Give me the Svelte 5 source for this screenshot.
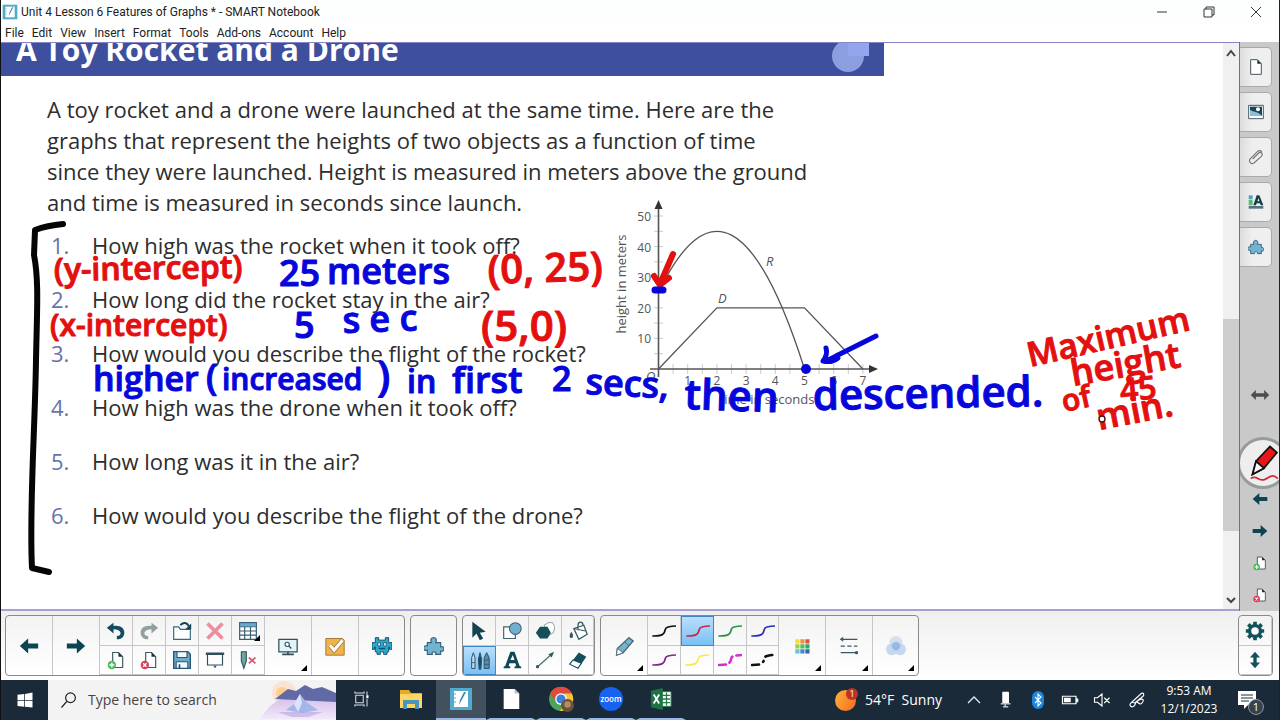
<script>
  const menus = ['File', 'Edit', 'View', 'Insert', 'Format', 'Tools', 'Add-ons', 'Account', 'Help'];

  const questions = [
    'How high was the rocket when it took off?',
    'How long did the rocket stay in the air?',
    'How would you describe the flight of the rocket?',
    'How high was the drone when it took off?',
    'How long was it in the air?',
    'How would you describe the flight of the drone?'
  ];

  const RED = '#e3100f';
  const BLUE = '#0606dc';

  // Ink notes on the free canvas: text, x, baseline, size, colour, slant in degrees
  const notes = [
    ['(y-intercept)', 54, 281, 32, RED, -1],
    ['25', 279, 286, 36, BLUE, 0],
    ['meters', 327, 284, 36, BLUE, 0],
    ['(0, 25)', 488, 284, 40, RED, -2],
    ['(x-intercept)', 50, 336, 30, RED, 0],
    ['5', 294, 338, 36, BLUE, 0],
    ['s e c', 343, 333, 36, BLUE, -2],
    ['(5,0)', 481, 341, 42, RED, 0],
    ['higher', 93, 391, 34, BLUE, 0],
    ['(', 206, 390, 36, BLUE, 0],
    ['increased', 222, 390, 30, BLUE, 0],
    [')', 377, 391, 42, BLUE, 0],
    ['in', 407, 393, 32, BLUE, 0],
    ['first', 452, 393, 36, BLUE, 0],
    ['2', 552, 391, 34, BLUE, 0],
    ['secs,', 585, 394, 36, BLUE, 3],
    ['then', 684, 409, 42, BLUE, 2],
    ['descended.', 813, 410, 42, BLUE, -1],
    ['Maximum', 1030, 367, 34, RED, -13],
    ['height', 1073, 386, 36, RED, -10],
    ['of', 1064, 412, 30, RED, -12],
    ['45', 1121, 402, 32, RED, -6],
    ['min.', 1099, 430, 36, RED, -11]
  ];

  const xTicks = [1, 2, 3, 4, 5, 6, 7];
  const yTicks = [10, 20, 30, 40, 50];
  const halves = Array.from({ length: 14 }, (_, i) => (i + 1) / 2);
  const fives = Array.from({ length: 10 }, (_, i) => (i + 1) * 5);
  const gx = (t) => 658.5 + t * 29.2;
  const gy = (h) => 369 - h * 3.06;

  const page = '<path d="M8 3h7l5 5v13H8z" fill="#fff" stroke="#3f5960" stroke-width="1.4"/><path d="M15 3v5h5z" fill="#12343b"/>';
  const stroke = (c, d = '') =>
    `<path d="M1 17c5 0 9 0 11-3s0-5 4-6 5-1 8-1" fill="none" stroke="${c}" stroke-width="${d ? 2.6 : 1.7}" stroke-linecap="round" stroke-dasharray="${d}"/>`;
  const puzzle = '<path d="M4 8h5c-4-8 9-8 5 0h6v5c5-2 5 7 0 5v4h-6c2-4-6-4-4 0H4v-5c-6 2-6-7 0-5z" fill="#73b3d2" stroke="#3b6276" stroke-width="1.4"/>';

  const icons = {
    left: '<path d="M1 12l10-9v6h12v6H11v6z" fill="#0b4650"/>',
    right: '<path d="M23 12L13 3v6H1v6h12v6z" fill="#0b4650"/>',
    undo: '<path d="M1 8l8-6v4c9-1 13 3 13 8s-4 8-9 8v-4c7 0 6-8-4-8v5z" fill="#144b5e"/>',
    redo: '<path d="M23 8l-8-6v4C6 5 2 9 2 14s4 8 9 8v-4c-7 0-6-8 4-8v5z" fill="#929ea2"/>',
    open: '<path d="M2 22V7h6l2 3h12v12z" fill="#fff" stroke="#386879" stroke-width="1.4"/><path d="M10 5c4-4 8-3 10 1" fill="none" stroke="#124451" stroke-width="2.4"/><path d="M23 3v7h-7z" fill="#124451"/>',
    cross: '<path d="M3 3l18 18M21 3L3 21" stroke="#ed8ea0" stroke-width="4.5"/>',
    table: '<path d="M2 2h20v20H2z" fill="#fff" stroke="#355e72" stroke-width="1.4"/><path d="M2 2h20v5H2z" fill="#69a9cc" stroke="#355e72"/><path d="M2 12h20M2 17h20M8 7v15M15 7v15" stroke="#355e72" stroke-width="1.4"/>',
    addpage: page + '<circle cx="7" cy="18" r="5" fill="#4bbb5a"/><path d="M7 15v6M4 18h6" stroke="#fff" stroke-width="1.6"/>',
    delpage: page + '<circle cx="7" cy="18" r="5" fill="#d8405a"/><path d="M5 16l4 4M9 16l-4 4" stroke="#fff" stroke-width="1.6"/>',
    save: '<path d="M2 2h17l3 3v17H2z" fill="#6aaccd" stroke="#285570" stroke-width="1.6"/><path d="M6 2h12v7H6zM5 14h14v8H5z" fill="#f5f8fa" stroke="#285570" stroke-width="1.3"/><path d="M9 17v5" stroke="#285570" stroke-width="2"/>',
    screen: '<path d="M3 5h18v13H3z" fill="#fff" stroke="#31505c" stroke-width="1.4"/><path d="M1 3h22v3H1z" fill="#31505c"/><path d="M10 19h4l-2 3z" fill="#31505c"/>',
    penx: '<path d="M4 2h6v11l-3 9-3-9z" fill="#6fa39c" stroke="#28565e" stroke-width="1.3"/><path d="M13 9l8 7M21 9l-8 7" stroke="#de5874" stroke-width="2"/>',
    monitor: '<path d="M1 4h22v15H1z" fill="#e3f3f8" stroke="#31505c" stroke-width="1.5"/><path d="M12 19v3M5 22h14" stroke="#31505c" stroke-width="2"/><circle cx="11" cy="10" r="2.6" fill="#fff" stroke="#31505c" stroke-width="1.3"/><path d="M13 12l3 3" stroke="#31505c" stroke-width="1.6"/>',
    check: '<path d="M1 3h20l2 2v18H1z" fill="#efb349" stroke="#a67c3d" stroke-width="1.2"/><path d="M6 11l5 6L21 5" fill="none" stroke="#a67c3d" stroke-width="5.5"/><path d="M6 11l5 6L21 5" fill="none" stroke="#fff" stroke-width="3.6"/>',
    alien: '<path d="M4 2h4v3h8V2h4v6h4v8h-3v-3h-1v6h-2v3h-4v-3h-4v3H6v-3H4v-6H3v3H0V8h4z" fill="#2ba9cd" stroke="#17526c" stroke-width="1.2"/><path d="M7 8h3v4H7zM14 8h3v4h-3z" fill="#fff" stroke="#17526c"/><path d="M8 15h8" stroke="#17526c" stroke-width="2"/>',
    puzzle,
    cursor: '<path d="M4 1l16 12-7 1 4 7-4 2-4-8-5 5z" fill="#12434f"/>',
    shapes: '<path d="M2 7h14v14H2z" fill="#fff" stroke="#42616d" stroke-width="1.4"/><circle cx="16" cy="9" r="7" fill="#73afd0" stroke="#42616d" stroke-width="1.3"/>',
    polygon: '<path d="M11 5l5-3h5l3 5-2 7-5 3z" fill="#fff" stroke="#7b898d"/><path d="M6 7h9l4 7-4 7H6l-5-7z" fill="#14505b"/>',
    bucket: '<path d="M7 9l12-4 4 11-10 6z" fill="#fff" stroke="#355a63" stroke-width="1.5"/><path d="M7 9l14 3M12 11V5c0-5 6-5 6 0" fill="none" stroke="#355a63" stroke-width="1.5"/><path d="M4 13c7 10-7 10 0 0z" fill="#355a63"/>',
    pens: '<g fill="#bcdcf0" stroke="#2c566a" stroke-width="1.2"><path d="M2 8l2-6 2 6v13H2z"/><path d="M10 10l2-8 2 8-1 12h-2z" fill="#1d4e60"/><path d="M17 8l3-6 3 6v13h-6z" fill="#5e8ba2"/></g><path d="M2 14h4M17 11h6M17 16h6" stroke="#2c566a"/>',
    letter: '<path d="M2 22v-2l2-1 6-17h5l6 17 2 1v2h-8v-2l2-1-1-3H9l-1 3 2 1v2zM10 12h5l-2-6z" fill="#124853"/>',
    line: '<path d="M3 20L20 5" stroke="#516b73" stroke-width="1.5"/><circle cx="3" cy="20" r="2" fill="#355a63"/><path d="M23 2l-3 7-4-4z" fill="#355a63"/>',
    eraser: '<path d="M13 3l9 5-9 13-10-5z" fill="#14505b"/><path d="M6 12l-4 5 10 5 4-6z" fill="#fff" stroke="#14505b" stroke-width="1.4"/>',
    pen: '<path d="M18 2l5 4-12 14-8 3 1-8z" fill="#76b4cb" stroke="#446673" stroke-width="1.5"/><path d="M4 15l7 5-8 3z" fill="#fff" stroke="#446673"/><path d="M13 7l5 5" stroke="#446673"/>',
    s1: stroke('#111'), s2: stroke('#cf2540'), s3: stroke('#2c9240'), s4: stroke('#2a2fb4'),
    s5: stroke('#7c2889'), s6: stroke('#f3ea4a'), s7: stroke('#d62fd0', '7 4'), s8: stroke('#111', '7 5 1 5'),
    grid: ['#f4dc36', '#ee9338', '#e44f4b', '#a2cf49', '#58bb55', '#2fa865', '#65c1dc', '#3d8cc9', '#3a62ae']
      .map((c, i) => `<path d="M${4 + (i % 3) * 6} ${4 + Math.floor(i / 3) * 6}h5v5h-5z" fill="${c}"/>`).join(''),
    lines: '<path d="M2 4h20M2 20h18" stroke="#355a63" stroke-width="1.5"/><path d="M2 12h20" stroke="#355a63" stroke-width="1.5" stroke-dasharray="5 3"/><path d="M5 1v6L1 4z" fill="#355a63"/><circle cx="21" cy="20" r="2" fill="#355a63"/>',
    blobs: '<circle cx="12" cy="8" r="8" fill="#d6e0ec"/><circle cx="7" cy="16" r="7" fill="#b8d0ec" opacity=".8"/><circle cx="17" cy="16" r="7" fill="#b8d0ec" opacity=".8"/><circle cx="12" cy="12" r="5" fill="#8bb2e3" opacity=".8"/>',
    gear: '<path d="M12 1v22M1 12h22M4 4l16 16M20 4L4 20" stroke="#12525c" stroke-width="4.4"/><circle cx="12" cy="12" r="6.5" fill="#fff" stroke="#12525c" stroke-width="4"/>',
    updown: '<path d="M12 2l6 7h-4v6h4l-6 7-6-7h4V9H6z" fill="#12525c"/>',
    leftright: '<path d="M1 12l6-6v4h10V6l6 6-6 6v-4H7v4z" fill="#4d4d4d"/>',
    page: '<path d="M4 1h10l6 6v16H4z" fill="#fff" stroke="#4a555a" stroke-width="1.5"/><path d="M14 1v6h6z" fill="#12343b"/>',
    picture: '<path d="M1 2h22v20H1z" fill="#fff" stroke="#34515e" stroke-width="1.4"/><path d="M3 4h18v14H3z" fill="#17455a"/><path d="M3 18V9c8 4 12 2 18 9z" fill="#8fbdd6"/><circle cx="15" cy="8" r="3" fill="#fff"/>',
    clip: '<path d="M7 15L16 6c4-3 7 2 4 5L9 21c-5 3-9-3-5-7L14 4c2-2 5-2 7 0" fill="none" stroke="#747474" stroke-width="1.7"/>',
    themes: '<path d="M1 2h6v6H1z" fill="#55a2c0"/><path d="M1 9h6v8H1z" fill="#55be74"/><path d="M8 17l5-15h4l6 15h-4l-1-3h-5l-1 3zM14 11h3l-1-5z" fill="#123f4a"/><path d="M1 18h22v4H1z" fill="#58717c"/>',
    app: '<path d="M1 1h22v22H1z" fill="#54aacd"/><path d="M5 4h14v16H5z" fill="#fff"/><path d="M17 5l-7 13 1-5 4-8z" fill="#3486ae"/><path d="M5 7h2M5 11h2M5 15h2" stroke="#54aacd"/>',
    win: '<path d="M2 5l9-1v8H2zM12 4l10-2v10H12zM2 13h9v8l-9-1zM12 13h10v9l-10-1z" fill="#fff"/>',
    search: '<circle cx="14" cy="9" r="6.5" fill="none" stroke="#222" stroke-width="1.6"/><path d="M9 14l-7 8" stroke="#222" stroke-width="1.6"/>',
    taskview: '<path d="M5 7h10v10H5zM4 4V2M16 4V2M4 20v2M16 20v2M3 4h14M3 20h14M20 2v5M20 12v10" fill="none" stroke="#d7dce0" stroke-width="1.4"/><path d="M19 7h3v4h-3z" fill="#fff"/>',
    folder: '<path d="M1 3h9l2 3h11v15H1z" fill="#e4a92e"/><path d="M1 7h22v14H1z" fill="#ffd662"/><path d="M4 13h16v9h-4v-5H8v5H4z" fill="#4a95bd"/>',
    doc: '<path d="M4 1h12l5 5v17H4z" fill="#fff"/><path d="M16 1v5h5z" fill="#bbb"/>',
    chrome: '<circle cx="12" cy="12" r="11" fill="#4aa657"/><path d="M2 7a11 11 0 0 1 20 0H12l-5 7z" fill="#df4a3d"/><path d="M22 7a11 11 0 0 1-11 16l5-9-1-7z" fill="#f5c631"/><circle cx="12" cy="12" r="5.4" fill="#fff"/><circle cx="12" cy="12" r="4.2" fill="#3c7fe0"/><circle cx="18" cy="18" r="6" fill="#6e5035"/><circle cx="18" cy="17" r="3" fill="#b28c65"/>',
    bluetooth: '<rect x="4" y="0" width="16" height="24" rx="8" fill="#1c86df"/><path d="M8 8l8 8-4 4V4l4 4-8 8" fill="none" stroke="#fff" stroke-width="1.5"/>',
    up: '<path d="M4 16l8-8 8 8" fill="none" stroke="#e8edf0" stroke-width="1.7"/>',
    mic: '<rect x="7" y="1" width="9" height="16" rx="1" fill="#fff"/><path d="M5 17h13M8 21h7M11 17v4" stroke="#bac4cb" stroke-width="2"/>',
    battery: '<path d="M2 7h18v10H2z" fill="none" stroke="#fff" stroke-width="1.6"/><path d="M4 9h9v6H4zM20 10h3v5h-3z" fill="#fff"/>',
    mute: '<path d="M2 9h4l6-5v16l-6-5H2zM15 9l7 7M22 9l-7 7" fill="none" stroke="#fff" stroke-width="1.5"/>',
    inkpen: '<path d="M5 15L18 3c3-1 4 2 2 4L9 16zM5 15c-6 4 1 9 4 4 2-6 3-5 5-3s4 2 6-2c2-5-6-4-10 2" fill="none" stroke="#fff" stroke-width="1.5"/>',
    excel: '<path d="M12 4h11v16H12z" fill="#fff" stroke="#237b4b"/><path d="M13 8h9M13 12h9M13 16h9M18 5v14" stroke="#237b4b" stroke-width="1.4"/><path d="M1 3l13-3v24L1 21z" fill="#1c7444"/><path d="M4 7l6 10M10 7L4 17" stroke="#fff" stroke-width="2"/>'
  };

  const files = [
    ['undo', 'Undo'], ['redo', 'Redo'], ['open', 'Open file'], ['cross', 'Delete'], ['table', 'Table', true],
    ['addpage', 'Add page'], ['delpage', 'Delete page'], ['save', 'Save'], ['screen', 'Screen shade'], ['penx', 'Clear ink']
  ];
  const tools = [
    ['cursor', 'Select'], ['shapes', 'Shapes'], ['polygon', 'Regular polygons'], ['bucket', 'Fill'],
    ['pens', 'Pens', false, true], ['letter', 'Text'], ['line', 'Lines'], ['eraser', 'Eraser']
  ];
  const inks = [
    ['s1', 'Black ink'], ['s2', 'Red ink', false, true], ['s3', 'Green ink'], ['s4', 'Blue ink'],
    ['s5', 'Purple ink'], ['s6', 'Yellow ink'], ['s7', 'Magenta dashes'], ['s8', 'Black dashes']
  ];
  const tabs = [
    ['page', 'Page sorter'], ['picture', 'Gallery'], ['clip', 'Attachments'], ['themes', 'Properties'], ['puzzle', 'Add-ons']
  ];
  const pageTools = [['left', 'Previous page'], ['right', 'Next page'], ['addpage', 'Add page'], ['delpage', 'Delete page']];
  const tray = [['up', 'Show hidden icons'], ['mic', 'Microphone'], ['bluetooth', 'Bluetooth'], ['battery', 'Battery'], ['mute', 'Volume muted'], ['inkpen', 'Pen menu']];
</script>

{#snippet icon(name, size = 20)}
  <svg width={size} height={size} viewBox="0 0 24 24" aria-hidden="true">{@html icons[name]}</svg>
{/snippet}

{#snippet tool([name, label, more, active], big)}
  <button class="tool" class:big class:active aria-label={label}>
    {@render icon(name, name[0] === 's' && name.length === 2 ? 24 : 20)}
    {#if more}<span class="more"></span>{/if}
  </button>
{/snippet}

<div class="window">
  <header class="titlebar">
    {@render icon('app', 16)}
    <span class="title">Unit 4 Lesson 6 Features of Graphs * - SMART Notebook</span>
    <button aria-label="Minimize"><svg width="12" height="12"><path d="M1 6h10" stroke="#333" /></svg></button>
    <button aria-label="Restore"><svg width="12" height="12"><path d="M1 3h8v8H1zM3 3V1h8v8H9" fill="none" stroke="#333" /></svg></button>
    <button aria-label="Close"><svg width="12" height="12"><path d="M1 1l10 10M11 1L1 11" stroke="#333" /></svg></button>
  </header>

  <nav class="menubar">
    {#each menus as m}<button>{m}</button>{/each}
  </nav>

  <main class="work">
    <section class="canvas">
      <div class="banner">
        <h1>A Toy Rocket and a Drone</h1>
        <svg class="mark" width="38" height="33" aria-hidden="true">
          <circle cx="17" cy="13" r="16" fill="#8b9ee0" />
          <path d="M17 0h27v13H17z" fill="#91a6ec" />
        </svg>
      </div>
      <p class="intro">
        A toy rocket and a drone were launched at the same time. Here are the<br />
        graphs that represent the heights of two objects as a function of time<br />
        since they were launched. Height is measured in meters above the ground<br />
        and time is measured in seconds since launch.
      </p>
      <ol class="questions">
        {#each questions as q, i}
          <li><span class="num">{i + 1}.</span><span>{q}</span></li>
        {/each}
      </ol>

      <svg class="layer">
        <g transform="translate(-1 -43)">
          <g class="graph">
            {#each halves as t}<path d="M{gx(t)} 364v10" class="tick" />{/each}
            {#each fives as h}<path d="M654 {gy(h)}h9" class="tick" />{/each}
            <path d="M658.5 377V209M650 369h219" stroke-width="1.6" />
            <path d="M658.5 200l-4 9h8zM878 369l-9-4v8z" fill="#333" stroke="none" />
            <path d="M{gx(0)} {gy(25)}Q{gx(2.5)} {gy(75)} {gx(5)} {gy(0)}" />
            <path d="M{gx(0)} {gy(0)}L{gx(2)} {gy(20)}H{gx(5)}L{gx(7)} {gy(0)}" />
            {#each xTicks as t}<text x={gx(t)} y="385" text-anchor="middle">{t}</text>{/each}
            {#each yTicks as h}<text x="651" y={gy(h) + 5} text-anchor="end">{h}</text>{/each}
            <text x="646" y="381" class="it">O</text>
            <text x="766" y="266" class="it">R</text>
            <text x="718" y="303" class="it">D</text>
            <text x="767" y="404" text-anchor="middle" class="axis">time in seconds</text>
            <text transform="translate(626 284) rotate(-90)" text-anchor="middle" class="axis">height in meters</text>
          </g>

          <g fill="none" stroke-linecap="round" stroke-linejoin="round">
            <path d="M63 224C52 225 43 227 35 230L34 255C39 280 37 310 36 360C35 430 29 510 32 568L49 572" stroke="#050505" stroke-width="6" />
            <path d="M673 254l-13 30M654 276l6 9 9-7" stroke={RED} stroke-width="6" />
            <path d="M655 290h8" stroke={BLUE} stroke-width="7" />
            <path d="M876 336L838 355Q828 361 823 361Q828 355 826 348M823 361Q832 363 838 358" stroke={BLUE} stroke-width="5" />
            <circle cx="806" cy="369" r="5" fill={BLUE} stroke="none" />
          </g>

          {#each notes as [t, x, y, size, color, turn]}
            <text class="note" transform="translate({x} {y}) rotate({turn})" font-size={size} fill={color} stroke={color}>{t}</text>
          {/each}
          <circle cx="1102" cy="419" r="3" fill="#fff" stroke="#4a1010" stroke-width="1.4" />
        </g>
      </svg>
    </section>

    <div class="scroll" aria-hidden="true">
      <svg width="16" height="20"><path d="M4 13l4-5 4 5" fill="none" stroke="#444" stroke-width="2" /></svg>
      <div class="gap above"></div>
      <div class="thumb"></div>
      <div class="gap below"></div>
      <svg width="16" height="20"><path d="M4 9l4 4 4-4" fill="none" stroke="#444" stroke-width="2" /></svg>
    </div>

    <aside class="side">
      {#each tabs as [name, label]}
        <button class="tab" aria-label={label}>{@render icon(name, 16)}</button>
      {/each}
      <button class="resize" aria-label="Move sidebar">{@render icon('leftright', 20)}</button>
      <div class="pages">
        <button class="pen" aria-label="Red pen">
          <svg width="40" height="40" viewBox="0 0 46 46">
            <path d="M31 4l8 7-15 18-13 7 4-15z" fill="#e81616" stroke="#111" stroke-width="2" />
            <path d="M15 21l9 8-13 7z" fill="#fff" stroke="#111" stroke-width="2" />
            <path d="M9 41c6-5 10 4 16 1s9-7 15-1" fill="none" stroke="#d72633" stroke-width="2" />
          </svg>
        </button>
        {#each pageTools as [name, label]}
          <button aria-label={label}>{@render icon(name, 16)}</button>
        {/each}
      </div>
    </aside>
  </main>

  <section class="toolbar" aria-label="Toolbar">
    <div class="group">
      {@render tool(['left', 'Previous page'], true)}
      {@render tool(['right', 'Next page'], true)}
      <div class="pairs five">{#each files as f}{@render tool(f)}{/each}</div>
      {@render tool(['monitor', 'View screens', true], true)}
      {@render tool(['check', 'Assessment'], true)}
      {@render tool(['alien', 'Activity builder'], true)}
    </div>
    <div class="group">{@render tool(['puzzle', 'Add-ons'], true)}</div>
    <div class="group">
      <div class="pairs">{#each tools as f}{@render tool(f)}{/each}</div>
    </div>
    <div class="group">
      {@render tool(['pen', 'Pen type', true], true)}
      <div class="pairs">{#each inks as f}{@render tool(f)}{/each}</div>
      {@render tool(['grid', 'Colour', true], true)}
      {@render tool(['lines', 'Line style', true], true)}
      {@render tool(['blobs', 'Transparency', true], true)}
    </div>
    <div class="group end">
      <div class="pairs one">
        {@render tool(['gear', 'Customize toolbar'])}
        {@render tool(['updown', 'Move toolbar'])}
      </div>
    </div>
  </section>

  <footer class="taskbar">
    <button class="start" aria-label="Start">{@render icon('win', 18)}</button>
    <label class="search">
      {@render icon('search', 18)}
      <input type="text" placeholder="Type here to search" aria-label="Type here to search" />
      <svg class="scene" width="76" height="38" viewBox="0 0 76 38" aria-hidden="true">
        <defs>
          <linearGradient id="water" x2="0" y2="1"><stop stop-color="#d6c0eb" /><stop offset="1" stop-color="#f1e9fa" /></linearGradient>
        </defs>
        <circle cx="24" cy="12" r="12" fill="#fbe3d4" /><circle cx="22" cy="12" r="6" fill="#fbd08a" />
        <path d="M0 38C8 26 16 18 26 17h50v21z" fill="url(#water)" />
        <path d="M15 18l13-10 8 2 9-6 8 4 9-2 14 6v9z" fill="#626aa6" />
        <path d="M26 29l8-6 6-10 6 8 12 8-16 3z" fill="#a4b6e8" /><path d="M34 23l6-10 2 9-4 9z" fill="#d9e4fb" />
        <path d="M18 31h45l-15 5H32z" fill="#a99ad9" opacity=".5" />
      </svg>
    </label>
    <button class="app plain" aria-label="Task view">{@render icon('taskview', 18)}</button>
    <button class="app plain" aria-label="File Explorer">{@render icon('folder', 24)}</button>
    <button class="app current" aria-label="SMART Notebook">{@render icon('app', 24)}</button>
    <button class="app" aria-label="Document">{@render icon('doc', 22)}</button>
    <button class="app" aria-label="Chrome">{@render icon('chrome', 26)}</button>
    <button class="app"><span class="zoom">zoom</span></button>
    <button class="app" aria-label="Excel">{@render icon('excel', 22)}</button>

    <button class="weather"><span class="sun"><span class="count">1</span></span>54°F&nbsp; Sunny</button>
    <div class="tray">
      {#each tray as [name, label]}<button aria-label={label}>{@render icon(name, 18)}</button>{/each}
    </div>
    <button class="clock"><span>9:53 AM</span><span>12/1/2023</span></button>
    <button class="notice" aria-label="1 notification">
      <svg width="20" height="20" viewBox="0 0 20 20"><path d="M1 1h18v14h-8l-4 4v-4H1z" fill="#fff" /><path d="M4 5h12M4 8h12M4 11h8" stroke="#1b2a3a" /></svg>
      <span class="one-badge">1</span>
    </button>
  </footer>
</div>

<style>
  :global(body) { margin: 0; background: #000; }
  * { box-sizing: border-box; }
  button {
    margin: 0; padding: 0; border: 0; background: none; color: inherit; font: inherit;
    display: flex; align-items: center; justify-content: center;
  }
  svg { display: block; flex: none; }

  .window {
    height: 100vh; display: flex; flex-direction: column; overflow: hidden;
    border-left: 1px solid #111; border-right: 1px solid #222;
    background: #fff; color: #222; font: 12px/16px "Open Sans", "Noto Sans", sans-serif;
  }
  .titlebar, .menubar { font-family: Roboto, "Open Sans", sans-serif; }
  .titlebar { display: flex; align-items: center; height: 24px; padding-left: 1px; background: #fdffff; }
  .title { flex: 1; padding-left: 3px; }
  .titlebar button { width: 47px; height: 24px; }
  .menubar { display: flex; gap: 8px; height: 18px; padding-left: 4px; background: #fff; }

  .work { flex: 1; min-height: 0; display: flex; }
  .canvas {
    position: relative; flex: 1; min-width: 0; overflow: hidden; background: #fff;
    border-top: 1px solid #8a84c4; border-bottom: 2px solid #a79fd2;
  }
  .banner {
    display: flex; justify-content: space-between; align-items: flex-end;
    height: 33px; width: 883px; max-width: 100%; padding: 0 15px 0 15px;
    background: #3e4f9d; color: #fff; overflow: hidden;
  }
  h1 { margin: 0 0 6px; font-size: 30px; line-height: 40px; font-weight: 700; white-space: nowrap; }
  .intro {
    margin: 18px 0 0 46px; font-size: 22px; line-height: 31px; color: #2d2d2d; white-space: nowrap;
  }
  .questions { margin: 0; padding: 0 0 0 50px; list-style: none; font-size: 22px; line-height: 54px; color: #2d2d2d; }
  .questions li { display: flex; height: 54px; white-space: nowrap; }
  .num { width: 41px; color: #6673ab; }

  .layer { position: absolute; inset: 0; width: 100%; height: 100%; }
  .graph { fill: none; stroke: #555; stroke-width: 1.3; }
  .graph .tick { stroke: #ccc; stroke-width: 1; }
  .graph text { fill: #555; stroke: none; font-size: 12px; }
  .graph .it { font-style: italic; font-size: 13px; }
  .graph .axis { font-size: 13px; }
  .note { font-family: "Open Sans", "Noto Sans", sans-serif; font-weight: 600; stroke-width: 1; stroke-linejoin: round; }

  .scroll {
    width: 16px; display: flex; flex-direction: column; background: #f0f0f0;
    border-top: 1px solid #8a84c4; border-bottom: 2px solid #a79fd2;
  }
  .gap.above { flex: 256; }
  .thumb { flex: 213; background: #cdcdcd; }
  .gap.below { flex: 58; }

  .side {
    width: 40px; display: flex; flex-direction: column; gap: 5px; padding-top: 5px;
    border-left: 1px solid #7167b8; background: #c9c9c9; overflow: hidden;
  }
  .tab {
    width: 32px; height: 40px; border: 1px solid #aaa; border-left: 0; border-radius: 0 5px 5px 0;
    background: linear-gradient(90deg, #dcdcdc, #efefef 40%);
  }
  .resize { margin-top: 108px; height: 30px; }
  .pages { position: relative; margin-top: auto; display: flex; flex-direction: column; }
  .pages > button { height: 32px; }
  .pages > .pen {
    position: absolute; left: -3px; top: -46px; width: 52px; height: 52px; z-index: 1;
    border: 3px solid #969c9c; border-radius: 50%; background: #eee;
  }

  .toolbar {
    display: flex; gap: 5px; padding: 4px 6px 4px 4px; height: 69px;
    background: linear-gradient(#efefef, #fff);
  }
  .group {
    display: flex; height: 61px; border: 1px solid #8b8989; border-radius: 4px; overflow: hidden;
    background: linear-gradient(#f3f3f3, #fff);
  }
  .group.end { margin-left: auto; }
  .pairs { display: grid; grid-template-columns: repeat(3, 33px) 32px; grid-template-rows: 30px 29px; }
  .pairs.five { grid-template-columns: repeat(5, 33px); }
  .pairs.one { grid-template-columns: 33px; }
  .tool { position: relative; border-right: 1px solid #c6c6c6; border-bottom: 1px solid #c6c6c6; }
  .tool.big { width: 47px; border-bottom: 0; }
  .group > .tool:last-child { border-right: 0; width: 45px; }
  .tool.active { background: linear-gradient(#b9defb, #79c1f5); border: 1px solid #3f86c4; }
  .more { position: absolute; right: 4px; bottom: 4px; border: 3px solid #000; border-top-color: transparent; border-left-color: transparent; }

  .taskbar { display: flex; height: 40px; background: #1b2a39; color: #fff; font-size: 14px; }
  .start { width: 47px; }
  .search { display: flex; align-items: center; width: 288px; background: #f3f3f3; padding-left: 12px; overflow: hidden; }
  .search input {
    flex: 1; min-width: 0; padding: 0 0 0 10px; border: 0; outline: 0; background: none;
    font: 14px/20px "Open Sans", "Noto Sans", sans-serif; color: #333;
  }
  .search input::placeholder { color: #444; opacity: 1; }
  .app { width: 50px; border-bottom: 2px solid #9ab8e6; background-clip: padding-box; border-left: 4px solid transparent; border-right: 4px solid transparent; }
  .app.plain { border-color: transparent; }
  .app.current { border-left: 0; border-right: 0; background: #43515f; }
  .zoom {
    width: 24px; height: 24px; border-radius: 50%; background: #1763f0;
    font-size: 8px; line-height: 23px; font-weight: 600; text-align: center;
  }
  .weather { margin-left: auto; gap: 9px; white-space: nowrap; }
  .sun { position: relative; width: 21px; height: 21px; border-radius: 50%; background: linear-gradient(120deg, #ffb13b, #f26c1d); }
  .count {
    position: absolute; right: -2px; top: -2px; width: 12px; height: 12px; border-radius: 50%;
    background: #bd3424; font-size: 9px; line-height: 12px;
  }
  .tray { display: flex; padding-left: 16px; }
  .tray button { width: 32px; }
  .tray button:last-child { width: 38px; }
  .clock { flex-direction: column; width: 66px; font-size: 12px; line-height: 18px; }
  .notice { position: relative; width: 57px; padding-right: 8px; }
  .one-badge {
    position: absolute; left: 26px; top: 19px; width: 16px; height: 16px; border: 1px solid #8b949c; border-radius: 50%;
    background: #36434f; font-size: 11px; line-height: 14px;
  }
</style>
